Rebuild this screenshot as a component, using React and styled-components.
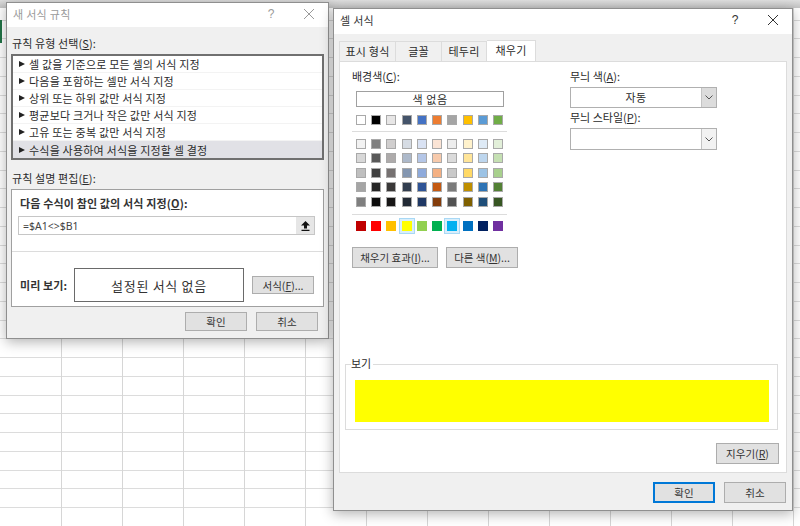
import React from "react";
import styled, { createGlobalStyle } from "styled-components";

const Global = createGlobalStyle`
  html, body { margin: 0; padding: 0; background: #fff; }
  body { font-family: "Noto Sans CJK KR", "Noto Sans", sans-serif; }
`;

const Desktop = styled.div`
  position: relative;
  width: 800px;
  height: 526px;
  overflow: hidden;
  color: #2b2b2b;
  font-size: 11px;
  background-color: #fff;
  background-image:
    linear-gradient(to bottom, #dedede 0, #c4c4c4 8px, transparent 8px),
    repeating-linear-gradient(to right, transparent 0, transparent 60px, #d6d6d6 60px, #d6d6d6 61px),
    repeating-linear-gradient(to bottom, transparent 0, transparent 17.75px, #dcdcdc 17.75px, #dcdcdc 18.75px);
  background-position: 0 0, 1px 0, 0 2px;
`;

const CellMarker = styled.div`
  position: absolute;
  left: 0;
  top: 20px;
  width: 2px;
  height: 23px;
  background: #217346;
`;

const Window = styled.section`
  position: absolute;
  left: ${(p) => p.$left}px;
  top: ${(p) => p.$top}px;
  width: ${(p) => p.$width}px;
  height: ${(p) => p.$height}px;
  box-sizing: border-box;
  display: flex;
  flex-direction: column;
  background: #f0f0f0;
  border: 1px solid #8f8f8f;
  box-shadow: 0 3px 12px rgba(0, 0, 0, 0.3);
`;

const TitleBar = styled.header`
  flex: none;
  height: ${(p) => p.$h}px;
  box-sizing: border-box;
  display: flex;
  align-items: center;
  background: #fff;
  padding: 0 13px 3px 6px;
  color: ${(p) => (p.$dim ? "#9a9a9a" : "#333")};
`;

const TitleText = styled.h1`
  flex: 1;
  margin: 0;
  font-size: 11px;
  font-weight: 400;
  letter-spacing: 0.3px;
`;

const HelpMark = styled.span`
  width: 14px;
  margin-right: 25px;
  text-align: center;
  font-size: 12px;
  font-family: "Liberation Sans", sans-serif;
`;

const CloseIcon = styled.svg`
  width: 12px;
  height: 12px;
  stroke: currentColor;
  stroke-width: 1;
  fill: none;
`;

const Body = styled.div`
  flex: 1;
  display: flex;
  flex-direction: column;
  padding: 0 4px;
`;

const SectionLabel = styled.div`
  height: 20px;
  line-height: 18px;
  margin-top: ${(p) => p.$mt}px;
  padding-left: 1px;
  letter-spacing: 0.1px;
`;

const Key = styled.u`
  text-underline-offset: 1px;
`;

const RuleList = styled.ul`
  list-style: none;
  margin: 0;
  padding: 0;
  border: 2px solid #707070;
  background: #fff;
`;

const RuleRow = styled.li`
  height: 17px;
  box-sizing: border-box;
  display: flex;
  align-items: center;
  gap: 4px;
  padding-left: 6px;
  letter-spacing: 0.2px;
  background: ${(p) => (p.$selected ? "#e1e1e6" : "#fff")};
  border-bottom: ${(p) => (p.$selected ? "0" : "1px solid #f3f3f3")};
`;

const Arrow = styled.i`
  width: 0;
  height: 0;
  border-style: solid;
  border-width: 3px 0 3px 6px;
  border-color: transparent transparent transparent #222;
`;

const EditBox = styled.div`
  height: 118px;
  box-sizing: border-box;
  border: 1px solid #a0a0a0;
  background: #fff;
  display: flex;
  flex-direction: column;
`;

const EditHeading = styled.div`
  height: 20px;
  line-height: 20px;
  margin: 3px 0 0 8px;
  font-weight: 700;
  letter-spacing: 0.15px;
  color: #333;
`;

const FormulaField = styled.div`
  width: 297px;
  height: 19px;
  margin: 3px 0 0 6px;
  box-sizing: border-box;
  border: 1px solid #c6c6c6;
  display: flex;
  align-items: center;
  justify-content: space-between;
  padding-left: 4px;
  font-family: "Noto Sans", sans-serif;
  font-size: 10.5px;
  color: #444;
`;

const PickerButton = styled.div`
  width: 18px;
  height: 17px;
  background: #e6e6e6;
  display: flex;
  align-items: center;
  justify-content: center;
`;

const PickerIcon = styled.svg`
  width: 9px;
  height: 10px;
  fill: #111;
`;

const Rule = styled.hr`
  margin: ${(p) => p.$margin || "16px 0 0"};
  width: ${(p) => (p.$width ? `${p.$width}px` : "auto")};
  border: 0;
  height: 1px;
  background: ${(p) => p.$color || "#dcdcdc"};
`;

const PreviewRow = styled.div`
  display: flex;
  align-items: center;
  margin: 16px 0 0 8px;
`;

const PreviewLabel = styled.div`
  width: 54px;
  flex: none;
  font-weight: 700;
  letter-spacing: 0.1px;
  color: #333;
`;

const PreviewBox = styled.div`
  width: 170px;
  height: 34px;
  box-sizing: border-box;
  border: 1px solid #6a6a6a;
  display: flex;
  align-items: center;
  justify-content: center;
  font-size: 13px;
  letter-spacing: 0.7px;
  color: #333;
`;

const Button = styled.button`
  flex: none;
  width: ${(p) => p.$w}px;
  height: ${(p) => p.$h}px;
  margin: ${(p) => p.$m || 0};
  padding: 0;
  box-sizing: border-box;
  border: 1px solid ${(p) => (p.$primary ? "#0078d7" : "#adadad")};
  box-shadow: ${(p) => (p.$primary ? "inset 0 0 0 1px #0078d7" : "none")};
  background: #e1e1e1;
  color: #333;
  font: inherit;
  font-size: 10.5px;
  white-space: nowrap;
`;

const Footer = styled.footer`
  display: flex;
  justify-content: flex-end;
  gap: 9px;
  margin-top: ${(p) => p.$mt}px;
  padding-right: ${(p) => p.$pr}px;
`;

const Tabs = styled.nav`
  display: flex;
  margin: 7px 0 0 5px;
  height: 20px;
`;

const Tab = styled.div`
  width: ${(p) => p.$w}px;
  box-sizing: border-box;
  text-align: center;
  line-height: 19px;
  letter-spacing: 0.25px;
  border: 1px solid #dcdcdc;
  border-left-width: ${(p) => (p.$first ? 1 : 0)}px;
  border-bottom: 0;
  background: ${(p) => (p.$active ? "#fff" : "#f0f0f0")};
  position: relative;
  top: ${(p) => (p.$active ? 1 : 0)}px;
  margin-top: ${(p) => (p.$active ? -2 : 0)}px;
  height: ${(p) => (p.$active ? 21 : 20)}px;
  z-index: 1;
`;

const Panel = styled.div`
  width: 448px;
  height: 412px;
  margin-left: 5px;
  box-sizing: border-box;
  border: 1px solid #dcdcdc;
  background: #fff;
  display: flex;
  flex-direction: column;
`;

const Columns = styled.div`
  display: flex;
  height: 205px;
`;

const FillColumn = styled.div`
  width: 230px;
  padding-left: 12px;
  padding-top: 7px;
  box-sizing: border-box;
`;

const PatternColumn = styled.div`
  width: 147px;
  padding-top: 7px;
`;

const FieldLabel = styled.div`
  height: 16px;
  line-height: 14px;
  margin-top: ${(p) => p.$mt || 0}px;
`;

const NoColor = styled.div`
  width: 148px;
  height: 16px;
  margin: 6px 0 0 4px;
  box-sizing: border-box;
  border: 1px solid #a0a0a0;
  text-align: center;
  line-height: 14px;
  letter-spacing: 0.6px;
`;

const Palette = styled.div`
  width: 153px;
  margin: ${(p) => p.$mt}px 0 0 1px;
  display: grid;
  grid-template-columns: repeat(10, 1fr);
  row-gap: 4.4px;
  justify-items: center;
`;

const SwatchCell = styled.div`
  width: 10px;
  height: 10px;
  box-sizing: border-box;
  background: ${(p) => p.$color};
  border: ${(p) => (p.$flat ? "0" : "1px solid #a9a9a9")};
  box-shadow: ${(p) => (p.$hot ? "0 0 0 2px #d8eefb, 0 0 0 3px #a8d8f5" : "none")};
`;

const ButtonRow = styled.div`
  display: flex;
  gap: 8px;
  margin-top: 16px;
`;

const Select = styled.div`
  height: ${(p) => p.$h}px;
  margin-top: ${(p) => p.$mt || 0}px;
  box-sizing: border-box;
  border: 1px solid #b0b0b0;
  display: flex;
  background: #fff;
`;

const SelectValue = styled.div`
  flex: 1;
  text-align: center;
  line-height: ${(p) => p.$h - 2}px;
  letter-spacing: 0.5px;
`;

const SelectArrow = styled.div`
  width: 14px;
  display: flex;
  align-items: center;
  justify-content: center;
  background: ${(p) => (p.$dim ? "#dcdcdc" : "#f2f2f2")};
  border-left: 1px solid #c4c4c4;
`;

const ChevronIcon = styled.svg`
  width: 8px;
  height: 5px;
  stroke: #555;
  fill: none;
  stroke-width: 1;
`;

const SampleGroup = styled.fieldset`
  position: relative;
  width: 433px;
  height: 66px;
  margin: 97px 0 0 5px;
  padding: 15px 8px 8px 9px;
  box-sizing: border-box;
  border: 1px solid #dcdcdc;
`;

const SampleLegend = styled.div`
  position: absolute;
  left: 5px;
  top: -10px;
  padding-right: 2px;
  background: #fff;
  line-height: 16px;
`;

const SampleFill = styled.div`
  height: 42px;
  background: #ffff00;
`;

const ClearRow = styled.div`
  display: flex;
  justify-content: flex-end;
  margin: 13px 7px 0 0;
`;

const RULES = [
  "셀 값을 기준으로 모든 셀의 서식 지정",
  "다음을 포함하는 셀만 서식 지정",
  "상위 또는 하위 값만 서식 지정",
  "평균보다 크거나 작은 값만 서식 지정",
  "고유 또는 중복 값만 서식 지정",
  "수식을 사용하여 서식을 지정할 셀 결정",
];

const THEME = ["#ffffff", "#000000", "#e7e6e6", "#44546a", "#4472c4", "#ed7d31", "#a5a5a5", "#ffc000", "#5b9bd5", "#70ad47"];
const TINTS = [
  "#f2f2f2", "#808080", "#d0cece", "#d6dce4", "#d9e2f3", "#fbe4d5", "#ededed", "#fff2cc", "#deeaf6", "#e2efd9",
  "#d8d8d8", "#595959", "#aeabab", "#adb9ca", "#b4c6e7", "#f7caac", "#dbdbdb", "#ffe599", "#bdd6ee", "#c5e0b3",
  "#bfbfbf", "#404040", "#767171", "#8496b0", "#8eaadb", "#f4b083", "#c9c9c9", "#ffd966", "#9cc3e5", "#a8d08d",
  "#a5a5a5", "#262626", "#3a3838", "#323e4f", "#2f5496", "#c45911", "#7b7b7b", "#bf8f00", "#2e74b5", "#538135",
  "#7f7f7f", "#0d0d0d", "#171616", "#222a35", "#1f3864", "#833c0b", "#525252", "#7f6000", "#1f4e79", "#375623",
];
const STANDARD = ["#c00000", "#ff0000", "#ffc000", "#ffff00", "#92d050", "#00b050", "#00b0f0", "#0070c0", "#002060", "#7030a0"];

const Close = () => (
  <CloseIcon viewBox="0 0 12 12">
    <path d="M1 1 L11 11 M11 1 L1 11" />
  </CloseIcon>
);

const Chevron = () => (
  <ChevronIcon viewBox="0 0 8 5">
    <path d="M0.5 0.5 L4 4 L7.5 0.5" />
  </ChevronIcon>
);

export default function App() {
  return (
    <Desktop>
      <Global />
      <CellMarker />

      <Window $left={6} $top={2} $width={323} $height={337}>
        <TitleBar $dim $h={24}>
          <TitleText>새 서식 규칙</TitleText>
          <HelpMark>?</HelpMark>
          <Close />
        </TitleBar>
        <Body>
          <SectionLabel $mt={7}>규칙 유형 선택(<Key>S</Key>):</SectionLabel>
          <RuleList>
            {RULES.map((r, i) => (
              <RuleRow key={r} $selected={i === 5}>
                <Arrow />
                {r}
              </RuleRow>
            ))}
          </RuleList>
          <SectionLabel $mt={9}>규칙 설명 편집(<Key>E</Key>):</SectionLabel>
          <EditBox>
            <EditHeading>다음 수식이 참인 값의 서식 지정(<Key>O</Key>):</EditHeading>
            <FormulaField>
              =$A1&lt;&gt;$B1
              <PickerButton>
                <PickerIcon viewBox="0 0 9 10">
                  <path d="M4.5 0 L9 4.5 H6 V7.5 H3 V4.5 H0 Z M0.5 8.8 H8.5 V10 H0.5 Z" />
                </PickerIcon>
              </PickerButton>
            </FormulaField>
            <Rule />
            <PreviewRow>
              <PreviewLabel>미리 보기:</PreviewLabel>
              <PreviewBox>설정된 서식 없음</PreviewBox>
              <Button $w={62} $h={18} $m="0 0 0 8px">서식(<Key>F</Key>)...</Button>
            </PreviewRow>
          </EditBox>
        </Body>
        <Footer $mt={5} $pr={10} style={{ marginBottom: 7 }}>
          <Button $w={62} $h={19}>확인</Button>
          <Button $w={62} $h={19}>취소</Button>
        </Footer>
      </Window>

      <Window $left={333} $top={8} $width={460} $height={503}>
        <TitleBar $h={25}>
          <TitleText>셀 서식</TitleText>
          <HelpMark>?</HelpMark>
          <Close />
        </TitleBar>
        <Tabs>
          <Tab $w={57} $first>표시 형식</Tab>
          <Tab $w={46}>글꼴</Tab>
          <Tab $w={45}>테두리</Tab>
          <Tab $w={49} $active>채우기</Tab>
        </Tabs>
        <Panel>
          <Columns>
            <FillColumn>
              <FieldLabel>배경색(<Key>C</Key>):</FieldLabel>
              <NoColor>색 없음</NoColor>
              <Palette $mt={8}>
                {THEME.map((c, i) => <SwatchCell key={i} $color={c} />)}
              </Palette>
              <Rule $margin="6px 0 0" $width={155} />
              <Palette $mt={7}>
                {TINTS.map((c, i) => <SwatchCell key={i} $color={c} />)}
              </Palette>
              <Rule $margin="7px 0 0" $width={155} />
              <Palette $mt={6}>
                {STANDARD.map((c, i) => <SwatchCell key={i} $color={c} $flat $hot={i === 3 || i === 6} />)}
              </Palette>
              <ButtonRow>
                <Button $w={86} $h={21}>채우기 효과(<Key>I</Key>)...</Button>
                <Button $w={72} $h={21}>다른 색(<Key>M</Key>)...</Button>
              </ButtonRow>
            </FillColumn>
            <PatternColumn>
              <FieldLabel>무늬 색(<Key>A</Key>):</FieldLabel>
              <Select $h={21} $mt={2}>
                <SelectValue $h={21}>자동</SelectValue>
                <SelectArrow $dim><Chevron /></SelectArrow>
              </Select>
              <FieldLabel $mt={2}>무늬 스타일(<Key>P</Key>):</FieldLabel>
              <Select $h={22} $mt={2}>
                <SelectValue $h={22} />
                <SelectArrow><Chevron /></SelectArrow>
              </Select>
            </PatternColumn>
          </Columns>
          <SampleGroup>
            <SampleLegend>보기</SampleLegend>
            <SampleFill />
          </SampleGroup>
          <ClearRow>
            <Button $w={63} $h={21}>지우기(<Key>R</Key>)</Button>
          </ClearRow>
        </Panel>
        <Footer $mt={9} $pr={6}>
          <Button $w={62} $h={21} $primary>확인</Button>
          <Button $w={62} $h={21}>취소</Button>
        </Footer>
      </Window>
    </Desktop>
  );
}
